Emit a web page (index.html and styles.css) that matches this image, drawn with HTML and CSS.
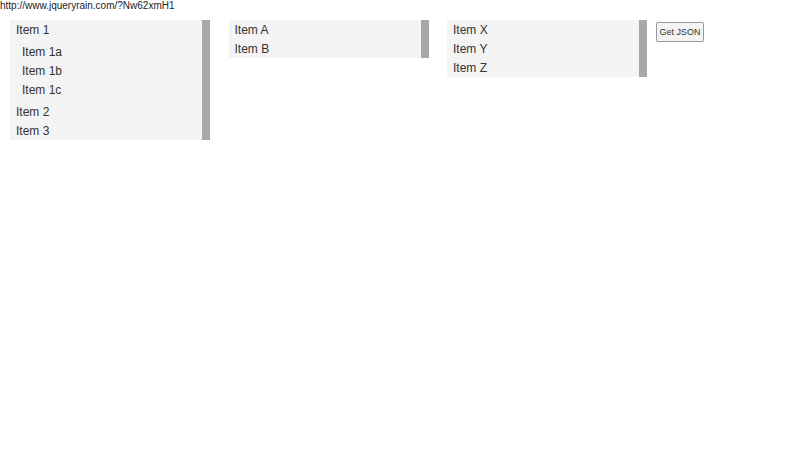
FILE: index.html
```html
<!DOCTYPE html>
<html>
  <head>
    <title>Sortable Lists</title>
    <link rel="stylesheet" href="styles.css">
  </head>
  <body>
    <div class="source-link">http://www.jqueryrain.com/?Nw62xmH1</div>

    <div class="lists">
      <ul class="sortable">
        <li class="item">Item 1
          <ul class="sortable nested">
            <li class="item">Item 1a</li>
            <li class="item">Item 1b</li>
            <li class="item">Item 1c</li>
          </ul>
        </li>
        <li class="item">Item 2</li>
        <li class="item">Item 3</li>
      </ul>

      <ul class="sortable">
        <li class="item">Item A</li>
        <li class="item">Item B</li>
      </ul>

      <ul class="sortable">
        <li class="item">Item X</li>
        <li class="item">Item Y</li>
        <li class="item">Item Z</li>
      </ul>

      <div>
        <button class="json-button">Get JSON</button>
      </div>
    </div>
  </body>
</html>
```
FILE: styles.css
```css
body {
  margin: 0;
  font-family: "Liberation Sans", Arial, sans-serif;
  color: #333;
}

.source-link {
  font-size: 10px;
  line-height: 11px;
  color: #222;
}

.lists {
  display: flex;
  align-items: flex-start;
  gap: 18.5px;
  padding: 9px 10px;
}

.sortable {
  list-style: none;
  margin: 0;
  padding: 0;
  width: 192px;
  background-color: #f4f4f4;
  border-right: 8px solid #a8a8a8;
  font-size: 12px;
}

.item {
  line-height: 18px;
  padding: 1px 0 0 6px;
}

.nested {
  width: auto;
  border-right: none;
  padding: 3px 0;
}

.json-button {
  margin-left: -9.5px;
  margin-top: 2px;
  width: 48px;
  height: 20px;
  padding: 0;
  font-family: "Liberation Sans", Arial, sans-serif;
  font-size: 9px;
  color: #333;
  background-color: #f4f4f4;
  border: 1px solid #999;
  border-radius: 2px;
}
```
